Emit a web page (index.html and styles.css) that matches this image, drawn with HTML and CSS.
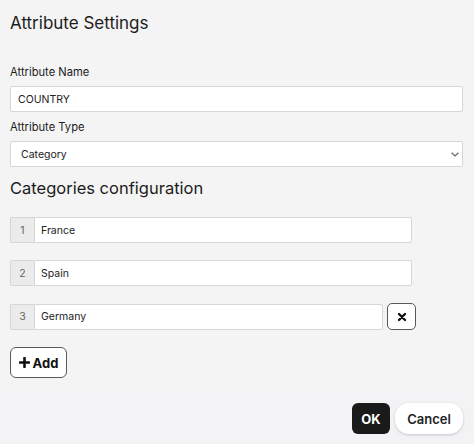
FILE: index.html
```html
<!DOCTYPE html>
<html>
<head>
<meta charset="utf-8">
<link rel="stylesheet" href="styles.css">
</head>
<body>
<div class="dialog">
  <div class="content">
    <h1 class="title">Attribute Settings</h1>
    <label class="label first">Attribute Name</label>
    <div class="field">COUNTRY</div>
    <label class="label">Attribute Type</label>
    <div class="select">
      <span>Category</span>
      <svg class="chev" width="8" height="5" viewBox="0 0 8 5"><path d="M0.6 0.8l3.4 3.2l3.4-3.2" fill="none" stroke="#666" stroke-width="1.2"/></svg>
    </div>
    <h2 class="section">Categories configuration</h2>
    <div class="cats">
      <div class="cat-row plain">
        <div class="cat-group"><span class="num">1</span><span class="cat-input">France</span></div>
      </div>
      <div class="cat-row plain">
        <div class="cat-group"><span class="num">2</span><span class="cat-input">Spain</span></div>
      </div>
      <div class="cat-row">
        <div class="cat-group"><span class="num">3</span><span class="cat-input">Germany</span></div>
        <button class="remove"><svg width="10" height="10" viewBox="0 0 10 10"><path d="M2 2l6 6M8 2l-6 6" stroke="#111" stroke-width="2.4" stroke-linecap="round"/></svg></button>
      </div>
    </div>
    <button class="add"><svg width="11" height="11" viewBox="0 0 11 11"><path d="M5.5 1v9M1 5.5h9" stroke="#111" stroke-width="2.6" stroke-linecap="round"/></svg><span>Add</span></button>
  </div>
  <div class="footer">
    <button class="ok">OK</button>
    <button class="cancel">Cancel</button>
  </div>
</div>
</body>
</html>
```
FILE: styles.css
```css
* { box-sizing: border-box; }
html, body { margin: 0; padding: 0; }
body {
  background: #f4f4f4;
  font-family: Inter, "Liberation Sans", sans-serif;
  color: #1c1c1c;
  width: 474px;
  height: 444px;
  overflow: hidden;
}
.dialog { display: flex; flex-direction: column; height: 444px; }
.content { padding: 10px 11px 0 10px; display: flex; flex-direction: column; align-items: flex-start; }
.title { margin: 0; font-size: 17px; font-weight: 400; line-height: 27px; }
.label { display: block; font-size: 11.2px; line-height: 18px; margin-top: 6px; margin-bottom: 5px; }
.label.first { margin-top: 26px; }
.field, .select {
  width: 453px;
  height: 26px;
  background: #fff;
  border: 1px solid #d6d6d6;
  border-radius: 2px;
  font-size: 10.5px;
  display: flex;
  align-items: center;
  padding-left: 7px;
  color: #222;
}
.select { padding-left: 10px; padding-right: 3px; justify-content: space-between; }
.section { margin: 10px 0 0; font-size: 16.5px; font-weight: 400; line-height: 22px; }
.cats { display: flex; flex-direction: column; gap: 17px; margin-top: 18px; }
.cat-row { display: flex; gap: 4px; width: 406px; align-items: center; }
.cat-row.plain { width: 402px; }
.cat-group { flex: 1; display: flex; height: 26px; }
.num {
  width: 24px;
  background: #ebebeb;
  border: 1px solid #d6d6d6;
  border-right: none;
  border-radius: 2px 0 0 2px;
  font-size: 10.5px;
  color: #666;
  display: flex;
  align-items: center;
  justify-content: center;
}
.cat-input {
  flex: 1;
  background: #fff;
  border: 1px solid #d6d6d6;
  border-radius: 0 2px 2px 0;
  font-size: 10.5px;
  display: flex;
  align-items: center;
  padding-left: 6px;
  color: #222;
}
.remove {
  width: 29px;
  height: 27px;
  border: 1px solid #5a5a5a;
  border-radius: 5px;
  background: #fff;
  display: flex;
  align-items: center;
  justify-content: center;
  padding: 0;
}
.add {
  margin-top: 17px;
  width: 57px;
  height: 31px;
  border: 1px solid #5a5a5a;
  border-radius: 6px;
  background: #fff;
  display: flex;
  align-items: center;
  justify-content: center;
  gap: 3px;
  font-family: Inter, "Liberation Sans", sans-serif;
  font-size: 13px;
  font-weight: 700;
  color: #111;
  padding: 0;
}
.footer {
  margin-top: 10px;
  flex: 1;
  background: #f3f3f5;
  display: flex;
  justify-content: flex-end;
  align-items: flex-start;
  gap: 5px;
  padding: 15px 11px 0 0;
}
.ok, .cancel {
  height: 31px;
  font-family: Inter, "Liberation Sans", sans-serif;
  font-size: 13px;
  font-weight: 700;
  padding: 0;
}
.ok {
  width: 38px;
  background: #1a1a1a;
  color: #fff;
  border: none;
  border-radius: 6px;
}
.cancel {
  width: 68px;
  background: #fff;
  color: #222;
  border: none;
  border-radius: 14px;
  box-shadow: 0 1px 3px rgba(0,0,0,0.18);
  font-weight: 600;
}
```
